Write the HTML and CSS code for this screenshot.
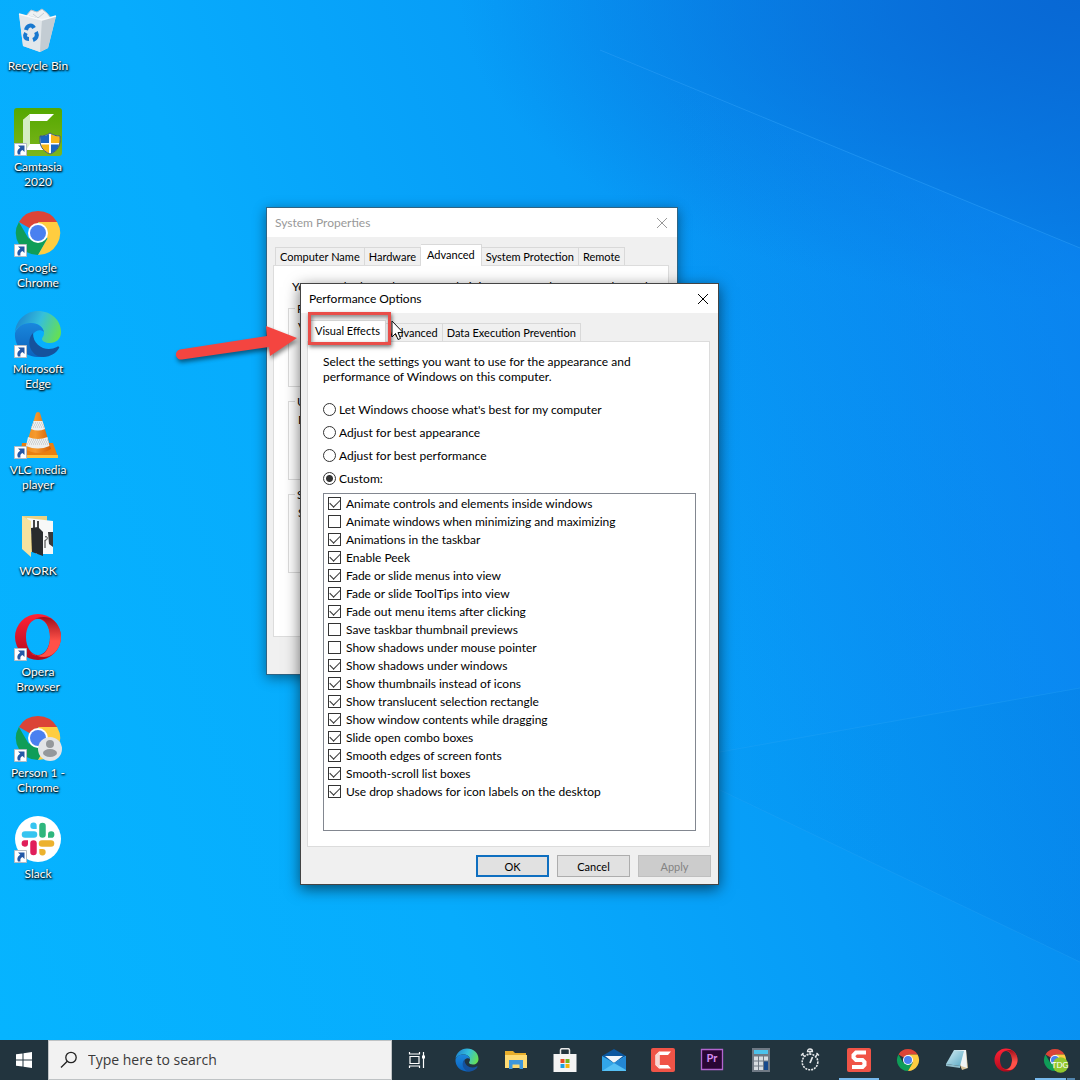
FILE: index.html
```html
<!DOCTYPE html>
<html lang="en">
<head>
<meta charset="utf-8">
<title>Desktop</title>
<link rel="stylesheet" href="styles.css">
</head>
<body>
<svg class="defs" width="0" height="0" aria-hidden="true">
  <defs>
    <linearGradient id="edgeTop" x1="0" y1="0.3" x2="1" y2="0.6"><stop offset="0" stop-color="#1b84d0"/><stop offset=".5" stop-color="#35bfdc"/><stop offset="1" stop-color="#66df54"/></linearGradient>
    <linearGradient id="edgeMid" x1="0" y1="0" x2="0" y2="1"><stop offset="0" stop-color="#1a87dc"/><stop offset="1" stop-color="#0b62bd"/></linearGradient>
    <linearGradient id="operaRing" x1="0" y1="0" x2="0" y2="1"><stop offset="0" stop-color="#ff2236"/><stop offset="1" stop-color="#b10a1c"/></linearGradient>
    <linearGradient id="operaIn" x1="0" y1="0" x2="0" y2="1"><stop offset="0" stop-color="#a0101c"/><stop offset=".6" stop-color="#ff5148"/></linearGradient>
    <linearGradient id="camGreen" x1="0" y1="0" x2="0" y2="1"><stop offset="0" stop-color="#54a800"/><stop offset="1" stop-color="#7cb51c"/></linearGradient>
    <linearGradient id="cone" x1="0" y1="0" x2="1" y2="0"><stop offset="0" stop-color="#ef8a1c"/><stop offset=".4" stop-color="#f59a2e"/><stop offset="1" stop-color="#d45f06"/></linearGradient>
    <linearGradient id="pad" x1="0" y1="0" x2="1" y2="1"><stop offset="0" stop-color="#d6eef4"/><stop offset="1" stop-color="#5aa9c4"/></linearGradient>
    <symbol id="chrome" viewBox="0 0 48 48">
      <path d="M24 24 4.900 13A22 22 0 0 1 43.100 13L24 13z" fill="#db4437"/>
      <path d="M4.900 13A22 22 0 0 0 24 46L33.500 29.500 14.500 29.500z" fill="#0f9d58"/>
      <path d="M43.100 13H24L33.500 29.500 24 46A22 22 0 0 0 43.100 13z" fill="#ffcd40"/>
      <circle cx="24" cy="24" r="10" fill="#fff"/><circle cx="24" cy="24" r="8" fill="#4a80f0"/>
    </symbol>
    <symbol id="edge" viewBox="0 0 48 48">
      <path d="M24 1C37 1 47 10 47 22c0 7-5 11-11 11-5 0-8-2-8-4 0-1.500 2-2.500 2-6 0-6-6-10-13-10C10 13 3 17 1 22 2 10 12 1 24 1z" fill="url(#edgeTop)"/>
      <path d="M1 23c2-6 8-10 16-10 7 0 12 4 13 9-3-3-8-2-11 2-6 8 1 21 13 22-3 1-6 1-9 1C10 46 0 36 1 23z" fill="url(#edgeMid)"/>
      <path d="M19 23c-6 6-5 18 5 23 9 3 18-2 21-8 1-1-1-2-2-1-10 5-24 0-24-14z" fill="#15529d"/>
    </symbol>
    <symbol id="opera" viewBox="0 0 48 48">
      <path fill-rule="evenodd" d="M24 1a23 23 0 1 0 0 46 23 23 0 0 0 0-46zm0 5c7 0 12 8 12 18s-5 18-12 18-12-8-12-18S17 6 24 6z" fill="url(#operaRing)"/>
      <path d="M17 8C23 4 33 2 39 7 44 11 47 17 47 24S44 37 39 41C33 46 23 44 17 40 20 43 24 43 27 42 33 40 36 32 36 24S33 8 27 6C24 5 20 5 17 8z" fill="url(#operaIn)"/>
    </symbol>
    <symbol id="shortcut" viewBox="0 0 13 13">
      <path d="M.5.500h12v12H.5z" fill="#fff" stroke="#b5bcc4"/>
      <path d="M4 2.500h6.500V9L8.500 7C6.500 8 6 9 6.500 11.500H4C2.500 8.500 4 6 6.300 4.800z" fill="#2458a6"/>
    </symbol>
  </defs>
</svg>
<main class="desktop">
  <svg class="wallpaper" viewBox="0 0 1080 1040" preserveAspectRatio="none" aria-hidden="true">
    <defs>
      <linearGradient id="beamA" x1="0" y1="0" x2="1" y2="0"><stop offset="0" stop-color="#0c90f4" stop-opacity="0"/><stop offset=".3" stop-color="#0c90f4" stop-opacity="0"/><stop offset="1" stop-color="#0c86f4" stop-opacity=".5"/></linearGradient>
      <linearGradient id="beamB" x1="0" y1="0" x2="1" y2="0"><stop offset=".3" stop-color="#0080e0" stop-opacity="0"/><stop offset="1" stop-color="#0070dc" stop-opacity=".18"/></linearGradient>
    </defs>
    <path d="M480 0 1080 248V688L720 752 480 780z" fill="url(#beamA)"/>
    <path d="M600 50 1080 248" stroke="#2da0f8" stroke-opacity=".5" fill="none"/>
    <path d="M300 820 720 752 1080 688V962L720 790z" fill="url(#beamB)"/>
    <path d="M720 752 1080 688M720 790 1080 962" stroke="#2ba4f6" stroke-opacity=".3" fill="none"/>
  </svg>

  <nav class="icons" aria-label="Desktop icons">
    <a class="shortcut" href="#recycle-bin">
      <svg width="48" height="48" viewBox="0 0 48 48"><path d="M12 9 17 3l6 2 5-3 5 4 4 5-8 5-15-2z" fill="#eef1f3" stroke="#b8c1c8"/><path d="M19 7l5 4 6-5M15 9l7 2" stroke="#c5ced5" fill="none"/><path d="M5 7 9 39 26 45 34 41 42 9 28 13z" fill="#d9e0e5"/><path d="M5 7 28 13 26 45 9 39z" fill="#e2e7eb"/><path d="M28 13 42 9 34 41 26 45z" fill="#c3ccd3"/><path d="M5 7 28 13 42 9" fill="none" stroke="#f7f9fa" stroke-width="1.500"/><g fill="none" stroke="#1878cf" stroke-width="4"><path d="M12 23c1-5 6-6 8-2"/><path d="M22 25c2 4 0 7-3 8"/><path d="M15 32c-4 0-5-3-3-6"/></g></svg>
      <span>Recycle Bin</span></a>
    <a class="shortcut" href="#camtasia">
      <svg width="48" height="48" viewBox="0 0 48 48"><rect width="48" height="48" rx="3" fill="url(#camGreen)"/><path d="M16 6H40L33 13H16L9 12z" fill="#fff"/><path d="M9 12 16 6V42H9z" fill="#d6edc4"/><path d="M16 36H34V42H12z" fill="#fff"/><path d="M36 25c3 2 6 3 10 3 1 9-2 15-10 18-8-3-11-9-10-18 4 0 7-1 10-3z" fill="#fff"/><path d="M35 26V35H26.500L26 28c3 0 6 0 9-2zM37 36.500h8c-1 5-4 7-8 9z" fill="#1c66c0"/><path d="M37 26c3 2 6 2 9 2.500V35h-9zM35 36.500h-8c1 5 4 7 8 9z" fill="#f7b718"/><path d="M36 25c3 2 6 3 10 3 1 9-2 15-10 18-8-3-11-9-10-18 4 0 7-1 10-3z" fill="none" stroke="#3e5c78"/><use href="#shortcut" y="35" width="13" height="13"/></svg>
      <span>Camtasia 2020</span></a>
    <a class="shortcut" href="#chrome-app">
      <svg width="48" height="48" viewBox="0 0 48 48"><use href="#chrome" width="48" height="48"/><use href="#shortcut" y="35" width="13" height="13"/></svg>
      <span>Google Chrome</span></a>
    <a class="shortcut" href="#edge-app">
      <svg width="48" height="48" viewBox="0 0 48 48"><use href="#edge" width="48" height="48"/><use href="#shortcut" y="35" width="13" height="13"/></svg>
      <span>Microsoft Edge</span></a>
    <a class="shortcut" href="#vlc">
      <svg width="48" height="48" viewBox="0 0 48 48"><path d="M8 32H39L44 46H6z" fill="#e97f10"/><path d="M5 44H44V47H5z" fill="#ffc13a"/><path d="M22 2Q24 0 26 2L37 38Q24 46 11 38z" fill="url(#cone)"/><path d="M19.500 10H28.500L31 18Q24 21 17 18zM14 26Q24 30 33.500 26L35.500 35Q24 40 12 35z" fill="#eceeee"/><path d="M19 12h10M18 14h12M17 16h13M15 29h19M14 31h21M13 33h22" stroke="#b8bbbd" stroke-dasharray="1 1"/><use href="#shortcut" y="35" width="13" height="13"/></svg>
      <span>VLC media player</span></a>
    <a class="shortcut" href="#work">
      <svg width="48" height="48" viewBox="0 0 48 48"><path d="M8 4H33V10L22 40H12z" fill="#ead182"/><path d="M13 6 39 9V42H22z" fill="#f7f8f8"/><path d="M20 8v8M24 9v8" stroke="#454545" stroke-width="2"/><path d="M17 16 24 15 29 20V44L18 40z" fill="#292b2d"/><path d="M34 20h5v15l-4-3z" fill="#383a3c"/><path d="M31 25c3-2 3 4 0 3v8" stroke="#333" fill="none"/><path d="M8 4 17 9V45L8 37z" fill="#f5e2a0"/></svg>
      <span>WORK</span></a>
    <a class="shortcut" href="#opera-app">
      <svg width="48" height="48" viewBox="0 0 48 48"><use href="#opera" width="48" height="48"/><use href="#shortcut" y="35" width="13" height="13"/></svg>
      <span>Opera Browser</span></a>
    <a class="shortcut" href="#person-1">
      <svg width="48" height="48" viewBox="0 0 48 48"><use href="#chrome" width="48" height="48"/><circle cx="36" cy="35" r="12" fill="#e2e4e6"/><circle cx="36" cy="30" r="4" fill="#94989b"/><ellipse cx="36" cy="39" rx="7" ry="4" fill="#94989b"/><use href="#shortcut" y="35" width="13" height="13"/></svg>
      <span>Person 1 - Chrome</span></a>
    <a class="shortcut" href="#slack">
      <svg width="48" height="48" viewBox="0 0 48 48"><circle cx="24" cy="24" r="23" fill="#fff"/><g stroke-width="6.500" stroke-linecap="round"><path d="M11 19.500H20" stroke="#36c5f0"/><path d="M28.500 11V19.500" stroke="#2eb67d"/><path d="M28 28.500H37" stroke="#ecb22e"/><path d="M19.500 28.500V37" stroke="#e01e5a"/></g><path d="M19.500 14A3.200 3.200 0 1 1 22.700 11V14z" fill="#36c5f0"/><path d="M34 19.500V22.700H37A3.200 3.200 0 1 0 34 19.500z" fill="#2eb67d"/><path d="M28.500 34H25.300V37A3.200 3.200 0 1 0 28.500 34z" fill="#ecb22e"/><path d="M14 28.500V25.300H11A3.200 3.200 0 1 0 14 28.500z" fill="#e01e5a"/><use href="#shortcut" y="35" width="13" height="13"/></svg>
      <span>Slack</span></a>
  </nav>

  <section class="window system" aria-label="System Properties">
    <header class="titlebar"><h2>System Properties</h2>
      <button class="close" aria-label="Close System Properties"><svg width="12" height="12" viewBox="0 0 12 12"><path d="M1 1 11 11M11 1 1 11"/></svg></button></header>
    <div class="content">
      <div class="tabs" role="tablist">
        <button role="tab">Computer Name</button><button role="tab">Hardware</button><button role="tab" aria-selected="true">Advanced</button><button role="tab">System Protection</button><button role="tab">Remote</button>
      </div>
      <div class="pane">
        <p>You must be logged on as an Administrator to make most of these changes.</p>
        <fieldset><legend>Performance</legend><p>Visual effects, processor scheduling, memory usage</p></fieldset>
        <fieldset><legend>User Profiles</legend><p>Desktop settings related to your sign-in</p></fieldset>
        <fieldset><legend>Startup and Recovery</legend><p>System startup and system failure information</p></fieldset>
      </div>
    </div>
  </section>

  <section class="window performance" aria-label="Performance Options">
    <header class="titlebar"><h2>Performance Options</h2>
      <button class="close" aria-label="Close Performance Options"><svg width="12" height="12" viewBox="0 0 12 12"><path d="M1 1 11 11M11 1 1 11"/></svg></button></header>
    <form class="content">
      <div class="tabs" role="tablist">
        <button type="button" role="tab" aria-selected="true">Visual Effects</button><button type="button" role="tab">Advanced</button><button type="button" role="tab">Data Execution Prevention</button>
      </div>
      <div class="pane">
        <p>Select the settings you want to use for the appearance and performance of Windows on this computer.</p>
        <div class="choices">
          <label><input type="radio" name="mode">Let Windows choose what's best for my computer</label>
          <label><input type="radio" name="mode">Adjust for best appearance</label>
          <label><input type="radio" name="mode">Adjust for best performance</label>
          <label><input type="radio" name="mode" checked>Custom:</label>
        </div>
        <div class="effects">
          <label><input type="checkbox" checked>Animate controls and elements inside windows</label>
          <label><input type="checkbox">Animate windows when minimizing and maximizing</label>
          <label><input type="checkbox" checked>Animations in the taskbar</label>
          <label><input type="checkbox" checked>Enable Peek</label>
          <label><input type="checkbox" checked>Fade or slide menus into view</label>
          <label><input type="checkbox" checked>Fade or slide ToolTips into view</label>
          <label><input type="checkbox" checked>Fade out menu items after clicking</label>
          <label><input type="checkbox">Save taskbar thumbnail previews</label>
          <label><input type="checkbox">Show shadows under mouse pointer</label>
          <label><input type="checkbox" checked>Show shadows under windows</label>
          <label><input type="checkbox" checked>Show thumbnails instead of icons</label>
          <label><input type="checkbox" checked>Show translucent selection rectangle</label>
          <label><input type="checkbox" checked>Show window contents while dragging</label>
          <label><input type="checkbox" checked>Slide open combo boxes</label>
          <label><input type="checkbox" checked>Smooth edges of screen fonts</label>
          <label><input type="checkbox" checked>Smooth-scroll list boxes</label>
          <label><input type="checkbox" checked>Use drop shadows for icon labels on the desktop</label>
        </div>
      </div>
      <footer class="actions">
        <button type="button" class="default">OK</button><button type="button">Cancel</button><button type="button" disabled>Apply</button>
      </footer>
    </form>
  </section>

  <div class="highlight"></div>
  <svg class="arrow" width="130" height="44" viewBox="0 0 130 44" aria-hidden="true"><path d="M8 28.500 95 15 94 5 125 17 98 35 97 26 10 38.500A5 5 0 0 1 8 28.500z" fill="#f44540"/></svg>
  <svg class="pointer" width="14" height="21" viewBox="0 0 14 21" aria-hidden="true"><path d="M1 1V17L4.500 13.500 7 19.500 9.500 18.500 7 12.500H12z" fill="#fff" stroke="#111"/></svg>
</main>

<footer class="taskbar">
  <button class="start" aria-label="Start"><svg width="16" height="16" viewBox="0 0 16 16" fill="#fff"><path d="M0 2.300 6.500 1.400V7.500H0zM7.500 1.200 16 0V7.500H7.500zM0 8.500H6.500V14.600L0 13.700zM7.500 8.500H16V16L7.500 14.800z"/></svg></button>
  <label class="search"><svg width="18" height="18" viewBox="0 0 18 18" fill="none" stroke="#222" stroke-width="1.300"><circle cx="11" cy="6.500" r="5.200"/><path d="M7.300 10.200 1 16.500"/></svg><input type="text" placeholder="Type here to search" aria-label="Type here to search"></label>
  <button class="taskview" aria-label="Task View"><svg width="18" height="18" viewBox="0 0 18 18" fill="none" stroke="#fff" stroke-width="1.200"><path d="M2 5.500H11V12.500H2zM1.500 1V3H11.500V1M1.500 17V15H11.500V17M15.500 1V17"/><path d="M14 4.500h3v3h-3z" fill="#fff" stroke="none"/></svg></button>
  <div class="apps">
    <button aria-label="Microsoft Edge"><svg width="24" height="24"><use href="#edge" width="24" height="24"/></svg></button>
    <button aria-label="File Explorer"><svg width="24" height="24" viewBox="0 0 24 24"><path d="M1 3H9L11 5H22V20H1z" fill="#e9ae2b"/><path d="M1 7H23V20H1z" fill="#ffdb73"/><path d="M5 12H19V21H15.500V16.500H8.500V21H5z" fill="#3e97dc"/></svg></button>
    <button aria-label="Microsoft Store"><svg width="24" height="24" viewBox="0 0 24 24"><path d="M7.500 7V2Q7.500.700 9 .700h6q1.500 0 1.500 1.300V7" fill="none" stroke="#e8e8e8" stroke-width="1.500"/><path d="M.5 6H23.500V24H.5z" fill="#f4f4f4"/><path d="M7.500 11h4v4h-4z" fill="#e74c25"/><path d="M12.500 11h4v4h-4z" fill="#78b41c"/><path d="M7.500 16h4v4h-4z" fill="#1ba1e4"/><path d="M12.500 16h4v4h-4z" fill="#f6b40c"/></svg></button>
    <button aria-label="Mail"><svg width="24" height="24" viewBox="0 0 24 24"><path d="M0 8 12 1 24 8V14H0z" fill="#0c579f"/><path d="M3 8H21L12 15z" fill="#f1f6fa"/><path d="M0 8 12 15 24 8V23H0z" fill="#32a5e8"/><path d="M0 23 24 8V23z" fill="#55c0f5"/><path d="M12 15 24 22V8z" fill="#2387d4"/></svg></button>
    <button aria-label="Camtasia"><svg width="24" height="24" viewBox="0 0 24 24"><rect width="24" height="24" rx="2" fill="#f05447"/><path d="M8 3.500H20L17 7H8.500V17H17L20 20.500H8L4.500 17V7z" fill="#fff"/><path d="M4.500 7 8.500 3.500V20.500L4.500 17z" fill="#f9d5d1"/></svg></button>
    <button aria-label="Premiere Pro"><svg width="24" height="24" viewBox="0 0 24 24"><path d="M1.500 1.500H22.500V21.500H1.500z" fill="#2a0634" stroke="#b265cf" stroke-width="1.300"/><text x="12" y="14" class="pr">Pr</text></svg></button>
    <button aria-label="Calculator"><svg width="24" height="24" viewBox="0 0 24 24"><path d="M3 0H21V24H3z" fill="#6f7984"/><path d="M5 2H19V6H5z" fill="#4cc2ec"/><path d="M5 8.500h4v4H5zM10 8.500h4v4h-4zM15 8.500h4v4h-4zM5 13.500h4v4H5zM10 13.500h4v4h-4zM5 18.500h4v3.500H5zM10 18.500h4v3.500h-4z" fill="#d7dde2"/><path d="M15 13.500h4v8.500h-4z" fill="#174a8e"/></svg></button>
    <button aria-label="Stopwatch"><svg width="24" height="24" viewBox="0 0 24 24" fill="none" stroke="#e7eaec"><circle cx="12" cy="14" r="7.800" stroke-width="1.600" stroke-dasharray="2 1"/><path d="M12 15 14.500 9" stroke-width="1.700"/><path d="M9.500 3.500Q9.500 1 12 1t2.500 2.500zM12 4v2.500M4 5.500 6 8M20 5.500 18 8M3 7.500 5.500 5M21 7.500 18.500 5" stroke-width="1.300"/></svg></button>
    <button class="running" aria-label="Snagit"><svg width="24" height="24" viewBox="0 0 24 24"><rect width="24" height="24" rx="2" fill="#f05447"/><path d="M19 4.500H9L6.500 7V9.500L9 12H15.500L17.500 14V17L15.500 19H5" fill="none" stroke="#fff" stroke-width="4"/></svg></button>
    <button aria-label="Google Chrome"><svg width="24" height="24"><use href="#chrome" width="24" height="24"/></svg></button>
    <button aria-label="Notepad"><svg width="24" height="24" viewBox="0 0 24 24"><path d="M9 2 21 2 23 20 17 22z" fill="#d8c398"/><path d="M9 2 21 2 22 20 16 18z" fill="#eff4f5"/><path d="M9 2 19 3 15 18 1 16z" fill="url(#pad)"/><path d="M1 16 15 18V20L1 18z" fill="#8fbdcb"/></svg></button>
    <button aria-label="Opera"><svg width="24" height="24"><use href="#opera" width="24" height="24"/></svg></button>
    <button class="running stacked" aria-label="Chrome, TDG profile"><svg width="28" height="26" viewBox="0 0 28 26"><use href="#chrome" x="2" y="1" width="24" height="24"/><circle cx="19.500" cy="18" r="7.800" fill="#91c72e"/><text x="19" y="21" class="tdg">TDG</text></svg></button>
  </div>
</footer>
</body>
</html>
```
FILE: styles.css
```css
* { box-sizing: border-box; }
body {
  margin: 0;
  min-height: 100vh;
  display: flex;
  flex-direction: column;
  font: 12px/15px Lato, "Open Sans", sans-serif;
  color: #000;
}
button, input { font: inherit; color: inherit; margin: 0; }
p, h2 { margin: 0; font: inherit; }
.defs { position: absolute; }

/* Desktop */
.desktop {
  position: relative;
  flex: 1;
  overflow: hidden;
  background:
    radial-gradient(ellipse 620px 300px at 100% 0, #0868d4 0%, #0868d400 100%),
    linear-gradient(70deg, #06b4ff 0%, #07acfd 34%, #079cf7 60%, #0888ee 86%, #087ce6 100%);
}
.wallpaper { position: absolute; inset: 0; width: 100%; height: 100%; }
.icons {
  position: relative;
  width: 76px;
  display: grid;
  grid-auto-rows: 101px;
  padding-top: 7px;
}
.shortcut {
  display: flex;
  flex-direction: column;
  align-items: center;
  gap: 3px;
  padding: 0 6px;
  color: #fff;
  text-align: center;
  text-decoration: none;
  text-shadow: 0 1px 2px #000, 1px 1px 2px #000;
}
.shortcut svg { flex: none; }

/* Windows */
.window {
  position: absolute;
  border: 1px solid #2f6484;
  background: #f0f0f0;
  box-shadow: 0 3px 12px #00000070;
}
.system { left: 266px; top: 207px; width: 412px; height: 468px; }
.performance { left: 300px; top: 283px; width: 419px; border-color: #444; box-shadow: 0 4px 14px #00000090; }
.titlebar {
  display: flex;
  align-items: center;
  justify-content: space-between;
  height: 29px;
  padding: 0 9px 0 8px;
  background: #fff;
}
.system .titlebar { color: #999; }
.close { display: flex; padding: 0; border: 0; background: none; }
.close path { fill: none; stroke: currentColor; stroke-width: 1; }
.content { padding: 7px 8px 0 6px; }
.tabs { display: flex; align-items: flex-end; height: 21px; padding-left: 2px; font-size: 11px; }
.tabs button {
  height: 18px;
  padding: 0 4px;
  border: 1px solid #d9d9d9;
  border-width: 1px 1px 0 0;
  background: #f0f0f0;
  white-space: nowrap;
  line-height: 16px;
}
.tabs button:first-child { border-left-width: 1px; }
.tabs button[aria-selected] {
  position: relative;
  height: 22px;
  margin-bottom: -1px;
  padding: 0 6px 2px;
  background: #fff;
}
.performance .tabs button[aria-selected] { padding: 0 5px 2px; }
.pane { border: 1px solid #dcdcdc; background: #fff; }
.system .pane { height: 372px; padding: 13px 14px; }
.system .pane p { white-space: nowrap; }
.system .pane > p { padding-left: 4px; overflow: hidden; }
.system fieldset {
  height: 86px;
  margin: 7px 0 0;
  padding: 3px 9px;
  border: 1px solid #dcdcdc;
}
.system legend { padding: 0 2px; margin-left: -3px; }
.performance .pane { padding: 12px 13px 15px 15px; }

/* Options */
.choices { display: grid; grid-auto-rows: 23px; margin-top: 14px; }
.choices label, .effects label { display: flex; align-items: center; }
.choices label { gap: 3px; }
.effects {
  display: grid;
  grid-auto-rows: 18px;
  align-content: start;
  height: 338px;
  margin-top: 3px;
  padding: 0 4px;
  border: 1px solid #828790;
}
.effects label { gap: 5px; }
input[type="radio"], input[type="checkbox"] {
  appearance: none;
  flex: none;
  width: 13px;
  height: 13px;
  border: 1px solid #333;
  background: #fff;
}
input[type="radio"] { border-radius: 50%; }
input[type="radio"]:checked { background: radial-gradient(circle, #333 3px, #fff 4px); }
input[type="checkbox"]:checked::before {
  content: "";
  display: block;
  width: 9px;
  height: 5px;
  margin: 2px 1px;
  border: solid #333;
  border-width: 0 0 1px 1px;
  transform: translateY(-1px) rotate(-45deg);
}

/* Dialog buttons */
.actions { display: flex; justify-content: flex-end; gap: 8px; margin-right: -1px; padding: 8px 0 7px; }
.actions button {
  width: 73px;
  height: 22px;
  padding: 0;
  border: 1px solid #adadad;
  background: #e1e1e1;
  font-size: 11px;
}
.actions .default { border: 2px solid #0f6fc0; }
.actions button:disabled { border-color: #bfbfbf; background: #ccc; color: #838383; }

/* Annotation and pointer */
.highlight {
  position: absolute;
  left: 308px;
  top: 312px;
  width: 83px;
  height: 33px;
  border: 3px solid #e94e49;
  box-shadow: 1px 2px 4px #0008, inset 1px 2px 4px #0007;
}
.arrow { position: absolute; left: 172px; top: 321px; filter: drop-shadow(1px 3px 2px #0007); }
.pointer { position: absolute; left: 391px; top: 320px; }

/* Taskbar */
.taskbar { display: flex; height: 40px; background: #22343e; overflow: hidden; }
.taskbar button {
  display: flex;
  align-items: center;
  justify-content: center;
  flex: none;
  padding: 0;
  border: 0;
  background: none;
}
.taskbar .start { width: 48px; }
.search {
  display: flex;
  align-items: center;
  gap: 10px;
  flex: 0 1 344px;
  padding-left: 11px;
  border: 1px solid #bfc3c5;
  background: #f2f2f2;
}
.search input {
  flex: 1;
  min-width: 0;
  padding: 0;
  border: 0;
  background: none;
  font: 14px/20px "Open Sans", sans-serif;
}
.search input::placeholder { color: #3a3a3a; opacity: 1; }
.taskbar .taskview { width: 50px; }
.apps { display: flex; }
.apps button { width: 49px; }
.apps .running { background: linear-gradient(#76b9ed, #76b9ed) center bottom / 40px 2px no-repeat; }
.apps .stacked { background-image: linear-gradient(90deg, #76b9ed 31px, #22343e 31px, #22343e 32px, #5285ae 32px); }
.pr { font: bold 11px Lato, sans-serif; fill: #d58cf0; text-anchor: middle; }
.tdg { font: 8px Lato, sans-serif; fill: #fff; text-anchor: middle; }
```
